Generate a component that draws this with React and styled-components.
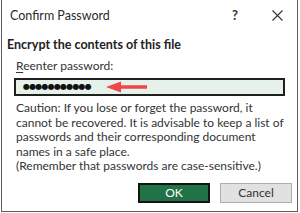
import styled, { createGlobalStyle } from "styled-components";

const GlobalStyle = createGlobalStyle`
  html, body {
    margin: 0;
    padding: 0;
    background: #ffffff;
  }
  body {
    font-family: Lato, "Noto Sans", "Liberation Sans", sans-serif;
    color: #333333;
  }
`;

const Window = styled.div`
  box-sizing: border-box;
  width: 297px;
  height: 212px;
  margin-left: 1px;
  border-left: 1px solid #5c5c5c;
  border-right: 1px solid #5c5c5c;
  border-bottom: 1px solid #5c5c5c;
  background: #ffffff;
  display: flex;
  flex-direction: column;
`;

const TitleBar = styled.div`
  height: 30px;
  display: flex;
  align-items: center;
  padding-left: 8px;
  font-size: 12.5px;
  color: #2b2b2b;
`;

const Title = styled.span`
  flex: 1;
`;

const TitleButton = styled.span`
  width: ${(p) => p.$w}px;
  height: 30px;
  display: flex;
  align-items: center;
  justify-content: center;
  font-size: 13px;
  font-weight: 700;
  color: #333333;
`;

const Body = styled.div`
  padding: 7px 3px 0 5px;
  font-size: 12px;
`;

const Heading = styled.div`
  font-weight: 700;
  font-size: 12.5px;
  line-height: 16px;
  color: #222222;
`;

const Label = styled.div`
  margin: 5px 0 0 9px;
  line-height: 16px;
  color: #333333;

  u {
    text-decoration-thickness: 1px;
    text-underline-offset: 2px;
  }
`;

const Field = styled.div`
  box-sizing: border-box;
  margin: 4px 0 0 7px;
  width: 271px;
  height: 18px;
  border: 2px solid #1f1f1f;
  background: #e6f1ea;
  display: flex;
  align-items: center;
  padding-left: 7px;
`;

const Dots = styled.span`
  font-family: "DejaVu Sans", sans-serif;
  font-size: 8px;
  letter-spacing: -0.8px;
  color: #111111;
  line-height: 1;
`;

const Arrow = styled.svg`
  margin-left: 15px;
  flex: none;
`;

const Caution = styled.div`
  margin: 5px 0 0 9px;
  line-height: 14.5px;
  color: #333333;
  white-space: nowrap;
`;

const Line = styled.div``;

const Buttons = styled.div`
  margin-top: 9px;
  display: flex;
  justify-content: flex-end;
  gap: 10px;
  padding-right: 2px;
`;

const Button = styled.button`
  box-sizing: border-box;
  width: 72px;
  height: 20px;
  font-family: inherit;
  font-size: 12px;
  padding: 0;
  border: ${(p) => (p.$primary ? "2px solid #151515" : "1px solid #adadad")};
  background: ${(p) => (p.$primary ? "#217346" : "#e1e1e1")};
  color: ${(p) => (p.$primary ? "#ffffff" : "#333333")};
`;

export default function App() {
  return (
    <>
      <GlobalStyle />
      <Window>
        <TitleBar>
          <Title>Confirm Password</Title>
          <TitleButton $w={44}>?</TitleButton>
          <TitleButton $w={40}>
            <svg width="11" height="11" viewBox="0 0 11 11">
              <path d="M0.5 0.5 L10.5 10.5 M10.5 0.5 L0.5 10.5" stroke="#333" strokeWidth="1.1" />
            </svg>
          </TitleButton>
        </TitleBar>
        <Body>
          <Heading>Encrypt the contents of this file</Heading>
          <Label>
            <u>R</u>eenter password:
          </Label>
          <Field>
            <Dots>●●●●●●●●●●●</Dots>
            <Arrow width="42" height="12" viewBox="0 0 42 12">
              <path d="M0 6 L15 0.5 L15 4.2 L41 4.2 L41 7.8 L15 7.8 L15 11.5 Z" fill="#f2454b" />
            </Arrow>
          </Field>
          <Caution>
            <Line>Caution: If you lose or forget the password, it</Line>
            <Line>cannot be recovered. It is advisable to keep a list of</Line>
            <Line>passwords and their corresponding document</Line>
            <Line>names in a safe place.</Line>
            <Line>(Remember that passwords are case-sensitive.)</Line>
          </Caution>
          <Buttons>
            <Button $primary>OK</Button>
            <Button>Cancel</Button>
          </Buttons>
        </Body>
      </Window>
    </>
  );
}
